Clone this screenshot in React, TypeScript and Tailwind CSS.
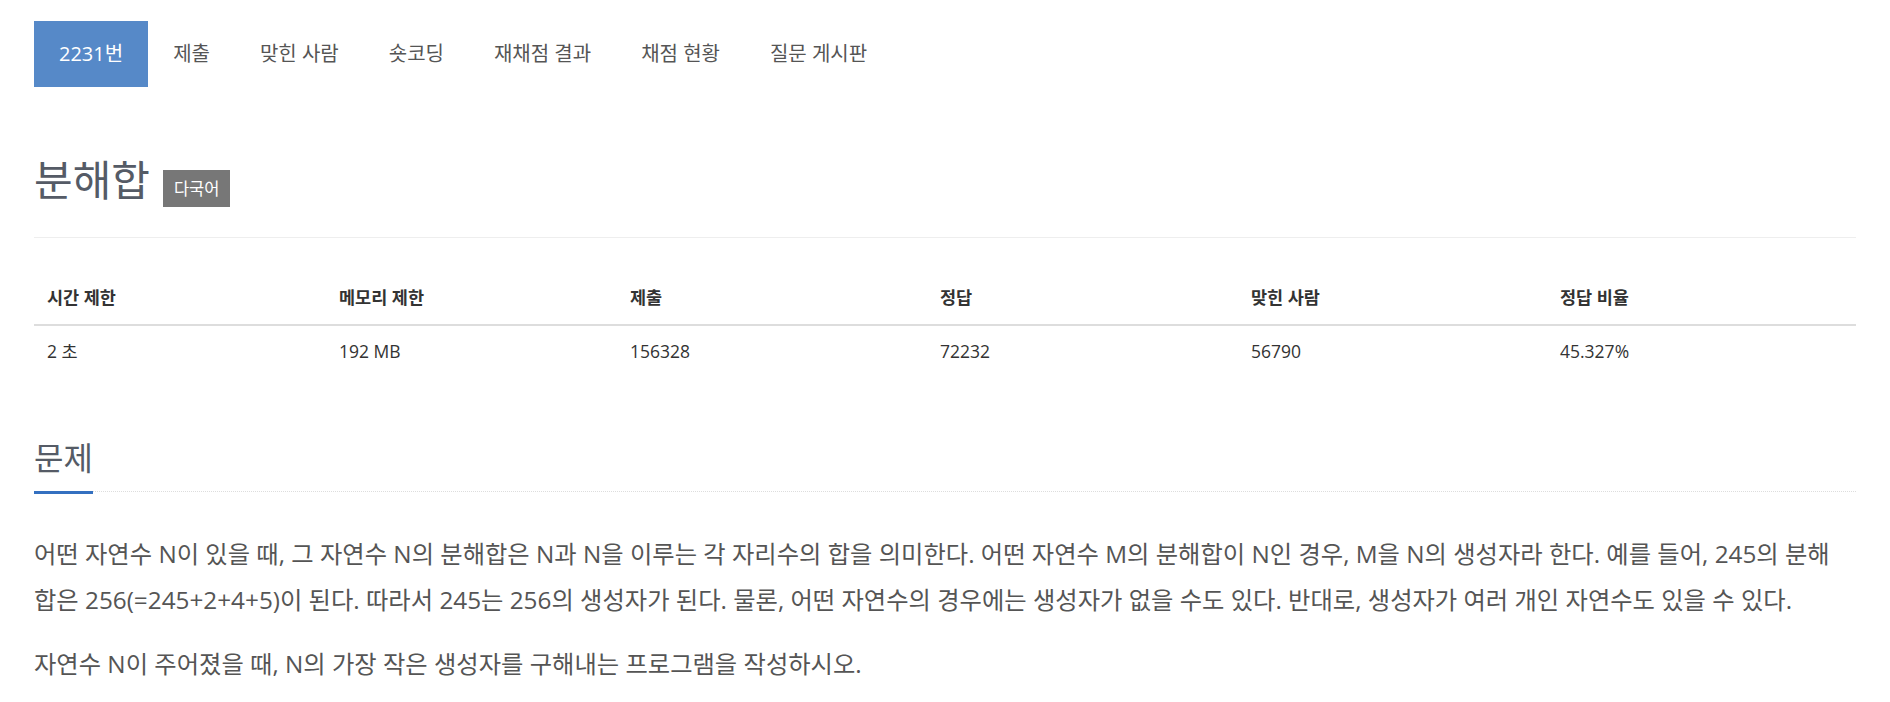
import React from "react";

const tabs = ["제출", "맞힌 사람", "숏코딩", "재채점 결과", "채점 현황", "질문 게시판"];

const stats = [
  { label: "시간 제한", value: "2 초" },
  { label: "메모리 제한", value: "192 MB" },
  { label: "제출", value: "156328" },
  { label: "정답", value: "72232" },
  { label: "맞힌 사람", value: "56790" },
  { label: "정답 비율", value: "45.327%" },
];

const font = "font-['Open_Sans','Noto_Sans_CJK_KR',sans-serif]";

export default function App() {
  return (
    <div className={`min-h-screen bg-white px-[34px] ${font}`}>
      {/* problem menu */}
      <nav className="flex pt-[21px]">
        <a className="flex h-[66px] items-center bg-[#5689c8] px-[25px] text-[20px] text-white">
          2231번
        </a>
        {tabs.map((t) => (
          <a
            key={t}
            className="flex h-[66px] items-center px-[25px] text-[20px] text-[#555]"
          >
            {t}
          </a>
        ))}
      </nav>

      {/* title */}
      <div className="mt-[70px] flex items-start border-b border-[#eee] pb-[30px]">
        <h1 className="text-[42px] leading-[46px] text-[#555b66]">분해합</h1>
        <span className="ml-[13px] mt-[13px] bg-[#777] px-[11px] text-[16.5px] leading-[37px] text-white">
          다국어
        </span>
      </div>

      {/* limits table */}
      <div className="mt-[32px] grid grid-cols-[292px_291px_310px_311px_309px_1fr] text-[17.5px] text-[#333]">
        {stats.map((s) => (
          <div
            key={s.label}
            className="flex h-[56px] items-center border-b-2 border-[#ddd] px-[13px] font-bold"
          >
            {s.label}
          </div>
        ))}
        {stats.map((s) => (
          <div key={s.label} className="flex h-[50px] items-center px-[13px]">
            {s.value}
          </div>
        ))}
      </div>

      {/* description */}
      <div className="mt-[64px] flex items-end">
        <h2 className="border-b-[3px] border-[#3470c0] pb-[16px] text-[32px] leading-[35px] text-[#555b66]">
          문제
        </h2>
        <div className="mb-[2px] flex-1 border-b border-dotted border-[#ddd]" />
      </div>

      <div className="mt-[37px] text-[24.3px] leading-[46px] text-[#555]">
        <p>
          어떤 자연수 N이 있을 때, 그 자연수 N의 분해합은 N과 N을 이루는 각 자리수의 합을 의미한다. 어떤 자연수 M의
          분해합이 N인 경우, M을 N의 생성자라 한다. 예를 들어, 245의 분해
          <br />
          합은 256(=245+2+4+5)이 된다. 따라서 245는 256의 생성자가 된다. 물론, 어떤 자연수의 경우에는 생성자가 없을
          수도 있다. 반대로, 생성자가 여러 개인 자연수도 있을 수 있다.
        </p>
        <p className="mt-[18px]">자연수 N이 주어졌을 때, N의 가장 작은 생성자를 구해내는 프로그램을 작성하시오.</p>
      </div>
    </div>
  );
}
